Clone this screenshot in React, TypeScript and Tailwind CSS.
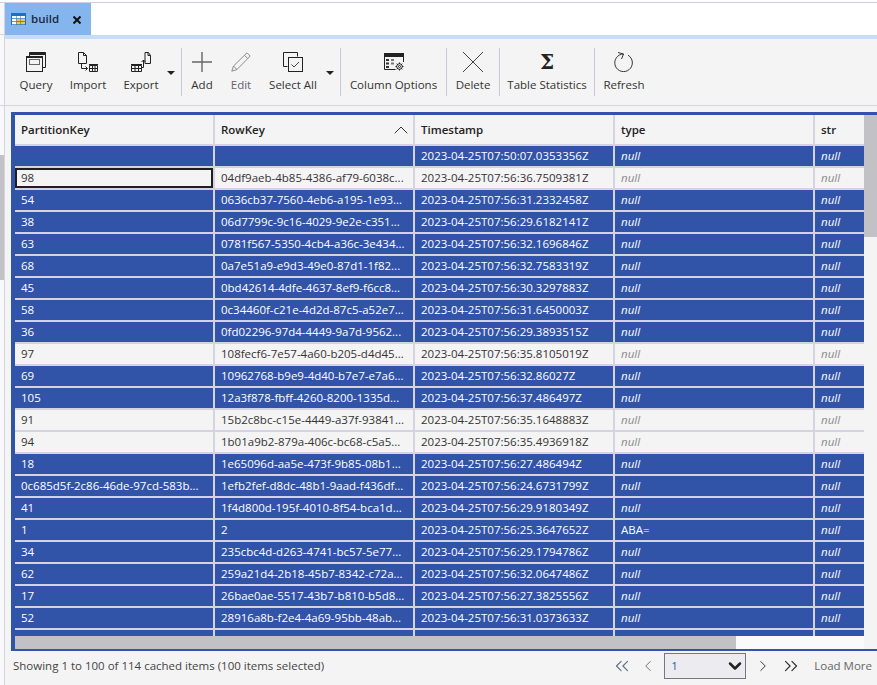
import { ChevronDown, ChevronUp, ChevronLeft, ChevronRight, ChevronsLeft, ChevronsRight } from 'lucide-react';

const FONT = "font-['Open_Sans','Noto_Sans',sans-serif]";

type Row = { pk: string; rk: string; ts: string; type: string; str: string; off?: boolean; focus?: boolean };

const rows: Row[] = [
  { pk: '', rk: '', ts: '2023-04-25T07:50:07.0353356Z', type: 'null', str: 'null' },
  { pk: '98', rk: '04df9aeb-4b85-4386-af79-6038c...', ts: '2023-04-25T07:56:36.7509381Z', type: 'null', str: 'null', off: true, focus: true },
  { pk: '54', rk: '0636cb37-7560-4eb6-a195-1e93...', ts: '2023-04-25T07:56:31.2332458Z', type: 'null', str: 'null' },
  { pk: '38', rk: '06d7799c-9c16-4029-9e2e-c351...', ts: '2023-04-25T07:56:29.6182141Z', type: 'null', str: 'null' },
  { pk: '63', rk: '0781f567-5350-4cb4-a36c-3e434...', ts: '2023-04-25T07:56:32.1696846Z', type: 'null', str: 'null' },
  { pk: '68', rk: '0a7e51a9-e9d3-49e0-87d1-1f82...', ts: '2023-04-25T07:56:32.7583319Z', type: 'null', str: 'null' },
  { pk: '45', rk: '0bd42614-4dfe-4637-8ef9-f6cc8...', ts: '2023-04-25T07:56:30.3297883Z', type: 'null', str: 'null' },
  { pk: '58', rk: '0c34460f-c21e-4d2d-87c5-a52e7...', ts: '2023-04-25T07:56:31.6450003Z', type: 'null', str: 'null' },
  { pk: '36', rk: '0fd02296-97d4-4449-9a7d-9562...', ts: '2023-04-25T07:56:29.3893515Z', type: 'null', str: 'null' },
  { pk: '97', rk: '108fecf6-7e57-4a60-b205-d4d45...', ts: '2023-04-25T07:56:35.8105019Z', type: 'null', str: 'null', off: true },
  { pk: '69', rk: '10962768-b9e9-4d40-b7e7-e7a6...', ts: '2023-04-25T07:56:32.86027Z', type: 'null', str: 'null' },
  { pk: '105', rk: '12a3f878-fbff-4260-8200-1335d...', ts: '2023-04-25T07:56:37.486497Z', type: 'null', str: 'null' },
  { pk: '91', rk: '15b2c8bc-c15e-4449-a37f-93841...', ts: '2023-04-25T07:56:35.1648883Z', type: 'null', str: 'null', off: true },
  { pk: '94', rk: '1b01a9b2-879a-406c-bc68-c5a5...', ts: '2023-04-25T07:56:35.4936918Z', type: 'null', str: 'null', off: true },
  { pk: '18', rk: '1e65096d-aa5e-473f-9b85-08b1...', ts: '2023-04-25T07:56:27.486494Z', type: 'null', str: 'null' },
  { pk: '0c685d5f-2c86-46de-97cd-583b...', rk: '1efb2fef-d8dc-48b1-9aad-f436df...', ts: '2023-04-25T07:56:24.6731799Z', type: 'null', str: 'null' },
  { pk: '41', rk: '1f4d800d-195f-4010-8f54-bca1d...', ts: '2023-04-25T07:56:29.9180349Z', type: 'null', str: 'null' },
  { pk: '1', rk: '2', ts: '2023-04-25T07:56:25.3647652Z', type: 'ABA=', str: 'null' },
  { pk: '34', rk: '235cbc4d-d263-4741-bc57-5e77...', ts: '2023-04-25T07:56:29.1794786Z', type: 'null', str: 'null' },
  { pk: '62', rk: '259a21d4-2b18-45b7-8342-c72a...', ts: '2023-04-25T07:56:32.0647486Z', type: 'null', str: 'null' },
  { pk: '17', rk: '26bae0ae-5517-43b7-b810-b5d8...', ts: '2023-04-25T07:56:27.3825556Z', type: 'null', str: 'null' },
  { pk: '52', rk: '28916a8b-f2e4-4a69-95bb-48ab...', ts: '2023-04-25T07:56:31.0373633Z', type: 'null', str: 'null' },
  { pk: '', rk: '', ts: '', type: '', str: '' },
];

function ToolButton({ icon, label, muted, w }: { icon: React.ReactNode; label: string; muted?: boolean; w: string }) {
  return (
    <div className={`${w} shrink-0 mt-[4px] flex flex-col items-center`}>
      <div className="h-[20px] flex items-center justify-center">{icon}</div>
      <span className={`mt-[5px] leading-[16px] whitespace-nowrap ${muted ? 'text-[#66606e]' : 'text-[#333]'}`}>{label}</span>
    </div>
  );
}

function Sep() {
  return <div className="w-px h-[48px] bg-[#c8c8d8] shrink-0" />;
}

function Caret() {
  return <div className="w-0 h-0 mt-[23px] shrink-0 border-x-[4px] border-x-transparent border-t-[4px] border-t-[#222]" />;
}

const QueryIcon = (
  <svg width="20" height="20" viewBox="0 0 20 20" fill="none" stroke="#222">
    <path d="M3.5 .5h16v2h-16z" fill="#222" />
    <path d="M3.5 2.5v2M19.5 2.5v13h-3" />
    <rect x=".5" y="4.5" width="16" height="15" fill="#f4f4f4" />
    <path d="M.5 5.5h16" />
    <rect x="3.5" y="7.5" width="10" height="5" stroke="#666" />
  </svg>
);

const ImportIcon = (
  <svg width="20" height="20" viewBox="0 0 20 20" fill="none" stroke="#222">
    <path d="M.5 .5h5l3 3v8h-8z" />
    <path d="M5.5 .5v3h3" />
    <path d="M3.5 12v4.500h6M7.500 14.500l2 2-2 2" />
    <path d="M11.500 13.500h8v6h-8z" />
    <path d="M11 12.500h9" />
    <path d="M11.500 16.500h8M14.500 13v7M17 13v7" />
  </svg>
);

const ExportIcon = (
  <svg width="20" height="20" viewBox="0 0 20 20" fill="none" stroke="#222">
    <path d="M14 .5h3.500l2 3v8h-5.500z" />
    <path d="M17 .5v3h2.500" />
    <path d="M.5 13.500h10v6H.5z" />
    <path d="M0 12.500h11" />
    <path d="M.5 16.500h10M4 13v7M7.500 13v7" />
    <path d="M11 15.500h1.500V8M10.500 10l2-2 2 2" />
  </svg>
);

const AddIcon = (
  <svg width="20" height="20" viewBox="0 0 20 20" fill="none" stroke="#666" strokeWidth="1.4">
    <path d="M10 0v20M0 10h20" />
  </svg>
);

const EditIcon = (
  <svg width="20" height="20" viewBox="0 0 20 20" fill="none" stroke="#8a8a8a">
    <path d="M16 .8l3.200 3.200L6 17.500l-5.200 1.700 1.700-5.200z" />
    <path d="M13.500 3.300l3.200 3.200M2.500 14l3.500 3.500" />
  </svg>
);

const SelectAllIcon = (
  <svg width="20" height="20" viewBox="0 0 20 20" fill="none" stroke="#222">
    <path d="M14.500 4.500v-4H.5v14h4" />
    <rect x="5.500" y="5.500" width="14" height="14" fill="#f4f4f4" />
    <path d="M8.500 12.500l2.500 2.500 5-5" stroke="#444" />
  </svg>
);

const ColumnOptionsIcon = (
  <svg width="20" height="18" viewBox="0 0 20 18" fill="none" stroke="#222">
    <path d="M0 0h20v4H0z" fill="#222" stroke="none" />
    <path d="M.5 4v12.500h11" />
    <path d="M19.500 4v5" />
    <path d="M2 6h3v2H2zM2 9.500h3v2H2zM2 13h3v2H2z" fill="#333" stroke="none" />
    <path d="M7 6h3v2H7zM7 9.500h3v2H7z" fill="#777" stroke="none" />
    <circle cx="15.500" cy="13.500" r="2.800" fill="#f4f4f4" />
    <circle cx="15.500" cy="13.500" r="1" />
    <path d="M15.500 9.500v1.500M15.500 16v1.500M11.500 13.500H13M18 13.500h1.500M12.700 10.700l1 1M17.300 15.300l1 1M18.300 10.700l-1 1M13.700 15.300l-1 1" />
  </svg>
);

const DeleteIcon = (
  <svg width="20" height="20" viewBox="0 0 20 20" fill="none" stroke="#444">
    <path d="M0 0l20 20M20 0L0 20" />
  </svg>
);

const RefreshIcon = (
  <svg width="20" height="20" viewBox="0 0 20 20" fill="none" stroke="#333">
    <path d="M14 3.200A8.800 8.800 0 1 1 9.500 2" />
    <path d="M4 .5l5.500 1.500-2 5" />
  </svg>
);

const TabIcon = (
  <svg width="15" height="12" viewBox="0 0 15 12">
    <rect width="15" height="12" fill="#1f6fc4" />
    <rect x="1" y="3" width="4" height="2.300" fill="#fff" />
    <rect x="5.500" y="3" width="4" height="2.300" fill="#fff" />
    <rect x="10" y="3" width="4" height="2.300" fill="#fff" />
    <rect x="1" y="6" width="4" height="2.300" fill="#fff" />
    <rect x="5.500" y="6" width="4" height="2.300" fill="#f5c542" />
    <rect x="10" y="6" width="4" height="2.300" fill="#f5c542" />
    <rect x="1" y="9" width="4" height="2.300" fill="#fff" />
    <rect x="5.500" y="9" width="4" height="2.300" fill="#f5c542" />
    <rect x="10" y="9" width="4" height="2.300" fill="#f5c542" />
  </svg>
);

function Cell({ w, row, children, italic, focus }: { w: string; row: Row; children: React.ReactNode; italic?: boolean; focus?: boolean }) {
  const color = row.off
    ? italic ? 'bg-[#f4f4f4] text-[#8a8a8a]' : 'bg-[#f4f4f4] text-[#333]'
    : 'bg-[#3254a8] text-white';
  return (
    <div className={`${w} shrink-0 h-full flex items-center overflow-hidden whitespace-nowrap ${color} ${italic ? 'italic' : ''} ${focus ? 'border-2 border-[#1f1f1f] px-[4px]' : 'px-[6px]'}`}>
      {children}
    </div>
  );
}

export default function App() {
  return (
    <div className={`w-[877px] h-[685px] overflow-hidden bg-white flex flex-col text-[11.5px] text-[#333] ${FONT}`}>
      <div className="h-[2px] shrink-0 bg-white" />
      <div className="h-px shrink-0 bg-[#cfcde0]" />
      <div className="flex-1 min-h-0 flex">
        {/* Left edge strip */}
        <div className="w-[5px] shrink-0 bg-[#f8f8fb] border-r border-[#d4d4e0] flex flex-col">
          <div className="h-[31px] shrink-0" />
          <div className="h-px shrink-0 bg-[#d4d4e0]" />
          <div className="h-[70px] shrink-0" />
          <div className="h-px shrink-0 bg-[#d4d4e0]" />
          <div className="h-[49px] shrink-0" />
          <div className="h-[125px] shrink-0 bg-[#c1c1c6]" />
        </div>

        <div className="flex-1 min-w-0 flex flex-col">
          {/* Tab strip */}
          <div className="h-[32px] shrink-0 bg-white">
            <div className="w-[86px] h-full bg-[#85b5ed] flex items-center pl-[6px] font-semibold text-[#1c2740]">
              <span className="mr-[5px] flex">{TabIcon}</span>
              build
              <svg width="8" height="8" viewBox="0 0 8 8" className="ml-[14px] mt-[1px]" stroke="#111" strokeWidth="2">
                <path d="M.5 .5l7 7M7.500 .5l-7 7" />
              </svg>
            </div>
          </div>
          <div className="h-[4px] shrink-0 bg-[#c7dcf5]" />

          {/* Toolbar */}
          <div className="h-[67px] shrink-0 bg-[#f4f4f4] border-b border-[#d4d4e0] flex items-start pl-[6px] pt-[9px]">
            <ToolButton w="w-[50px]" icon={QueryIcon} label="Query" />
            <ToolButton w="w-[54px]" icon={ImportIcon} label="Import" />
            <ToolButton w="w-[52px]" icon={ExportIcon} label="Export" />
            <Caret />
            <div className="w-[6px] shrink-0" />
            <Sep />
            <ToolButton w="w-[40px]" icon={AddIcon} label="Add" />
            <ToolButton w="w-[38px]" icon={EditIcon} label="Edit" muted />
            <ToolButton w="w-[66px]" icon={SelectAllIcon} label="Select All" />
            <Caret />
            <div className="w-[6px] shrink-0" />
            <Sep />
            <ToolButton w="w-[105px]" icon={ColumnOptionsIcon} label="Column Options" />
            <Sep />
            <ToolButton w="w-[52px]" icon={DeleteIcon} label="Delete" />
            <Sep />
            <ToolButton
              w="w-[94px]"
              icon={<span className="font-['DejaVu_Serif',serif] font-bold text-[20px] text-[#222] leading-none">Σ</span>}
              label="Table Statistics"
            />
            <Sep />
            <ToolButton w="w-[58px]" icon={RefreshIcon} label="Refresh" />
          </div>

          {/* Grid */}
          <div className="flex-1 min-h-0 bg-[#f4f4f4] flex flex-col pl-[6px]">
            <div className="h-[539px] mt-[6px] shrink-0 border-l-[4px] border-t-[3px] border-b-[2px] border-[#3254a8] bg-[#f4f4f4] flex flex-col overflow-hidden">
              <div className="flex-1 min-h-0 flex">
                <div className="w-[849px] shrink-0 flex flex-col overflow-hidden">
                  <div className="h-[31px] shrink-0 flex gap-[2px] pb-[2px] bg-[#d4d4e0] font-semibold text-[#222]">
                    <div className="w-[198px] shrink-0 bg-[#f4f4f4] px-[6px] flex items-center">PartitionKey</div>
                    <div className="w-[198px] shrink-0 bg-[#f4f4f4] pl-[6px] flex items-center justify-between">
                      RowKey
                      <ChevronUp size={24} strokeWidth={1} className="text-[#333]" />
                    </div>
                    <div className="w-[198px] shrink-0 bg-[#f4f4f4] px-[6px] flex items-center">Timestamp</div>
                    <div className="w-[198px] shrink-0 bg-[#f4f4f4] px-[6px] flex items-center">type</div>
                    <div className="w-[49px] shrink-0 bg-[#f4f4f4] px-[6px] flex items-center">str</div>
                  </div>
                  {rows.map((row, i) => (
                    <div key={i} className="h-[22px] shrink-0 flex gap-[2px] pb-[2px] bg-[#d4d4e0]">
                      <Cell w="w-[198px]" row={row} focus={row.focus}>{row.pk}</Cell>
                      <Cell w="w-[198px]" row={row}>{row.rk}</Cell>
                      <Cell w="w-[198px]" row={row}>{row.ts}</Cell>
                      <Cell w="w-[198px]" row={row} italic={row.type === 'null'}>{row.type}</Cell>
                      <Cell w="w-[49px]" row={row} italic>{row.str}</Cell>
                    </div>
                  ))}
                </div>
                <div className="w-[13px] shrink-0 bg-[#f4f4f4]">
                  <div className="h-[122px] bg-[#c1c1c6]" />
                </div>
              </div>
              <div className="h-[13px] shrink-0 bg-[#f4f4f4] flex">
                <div className="w-[721px] h-full bg-[#c1c1c6]" />
                <div className="w-[128px] h-full bg-[#fafafa]" />
              </div>
            </div>

            {/* Footer */}
            <div className="flex-1 min-h-0 flex items-center pl-[2px] pr-[5px] pb-[4px]">
              <span className="text-[#444]">Showing 1 to 100 of 114 cached items (100 items selected)</span>
              <div className="ml-auto flex items-center">
                <ChevronsLeft size={22} strokeWidth={1.3} className="text-[#667085]" />
                <ChevronLeft size={18} strokeWidth={1.3} className="ml-[6px] text-[#667085]" />
                <div className="ml-[7px] w-[82px] h-[26px] border border-[#77777f] bg-[#ececf0] flex items-center justify-between pl-[6px] text-[#1f5fa8]">
                  1
                  <ChevronDown size={20} strokeWidth={3} className="text-[#222]" />
                </div>
                <ChevronRight size={18} strokeWidth={1.3} className="ml-[8px] text-[#333]" />
                <ChevronsRight size={22} strokeWidth={1.3} className="ml-[8px] text-[#333]" />
                <span className="ml-[12px] text-[#666] whitespace-nowrap">Load More</span>
              </div>
            </div>
          </div>
        </div>
      </div>
    </div>
  );
}
